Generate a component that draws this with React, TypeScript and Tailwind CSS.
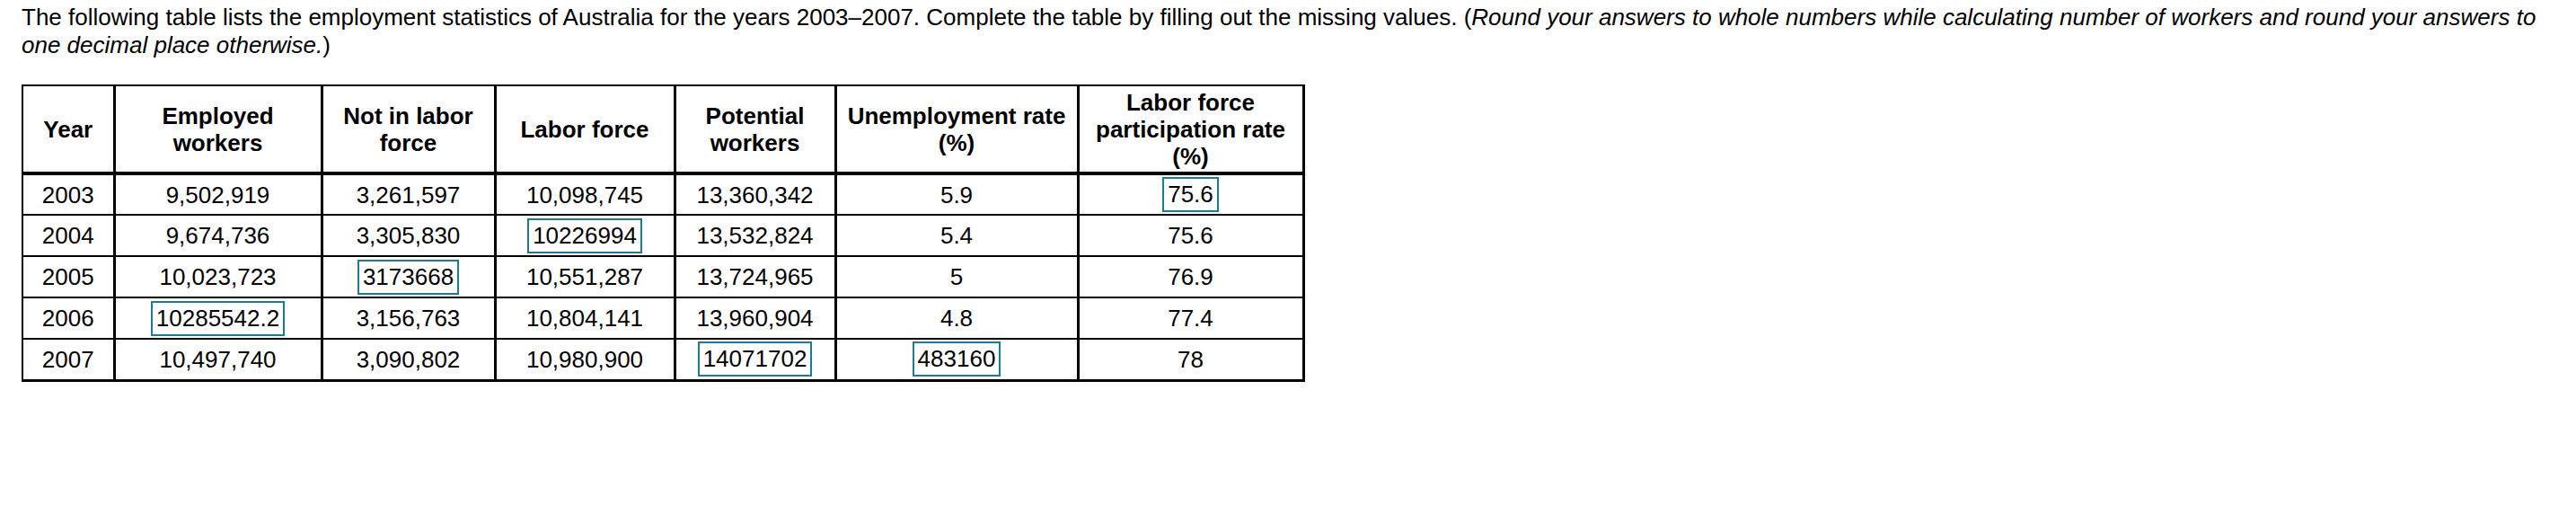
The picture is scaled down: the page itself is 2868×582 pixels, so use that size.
import React from 'react';

type Cell = { value: string; answer?: boolean };

const rows: { year: string; cells: Cell[] }[] = [
  {
    year: '2003',
    cells: [
      { value: '9,502,919' },
      { value: '3,261,597' },
      { value: '10,098,745' },
      { value: '13,360,342' },
      { value: '5.9' },
      { value: '75.6', answer: true },
    ],
  },
  {
    year: '2004',
    cells: [
      { value: '9,674,736' },
      { value: '3,305,830' },
      { value: '10226994', answer: true },
      { value: '13,532,824' },
      { value: '5.4' },
      { value: '75.6' },
    ],
  },
  {
    year: '2005',
    cells: [
      { value: '10,023,723' },
      { value: '3173668', answer: true },
      { value: '10,551,287' },
      { value: '13,724,965' },
      { value: '5' },
      { value: '76.9' },
    ],
  },
  {
    year: '2006',
    cells: [
      { value: '10285542.2', answer: true },
      { value: '3,156,763' },
      { value: '10,804,141' },
      { value: '13,960,904' },
      { value: '4.8' },
      { value: '77.4' },
    ],
  },
  {
    year: '2007',
    cells: [
      { value: '10,497,740' },
      { value: '3,090,802' },
      { value: '10,980,900' },
      { value: '14071702', answer: true },
      { value: '483160', answer: true },
      { value: '78' },
    ],
  },
];

function Answer({ value }: { value: string }) {
  return (
    <span className="inline-block border-2 border-[#1b7c98] px-[4px] py-[3px] leading-[29px]">
      {value}
    </span>
  );
}

export default function App() {
  return (
    <div className="min-h-screen bg-white text-black font-['Liberation_Sans',Arial,sans-serif] pl-[24px] pt-[4px]">
      <p className="text-[26px] leading-[31px]">
        The following table lists the employment statistics of Australia for the years 2003–2007. Complete the table by
        filling out the missing values. (
        <i>Round your answers to whole numbers while calculating number of workers and round your answers to</i>
        <br />
        <i>one decimal place otherwise.</i>)
      </p>

      <table className="mt-[28px] w-[1428px] table-fixed border-collapse text-[26px] text-center">
        <colgroup>
          <col className="w-[102px]" />
          <col className="w-[231px]" />
          <col className="w-[193px]" />
          <col className="w-[200px]" />
          <col className="w-[179px]" />
          <col className="w-[270px]" />
          <col className="w-[251px]" />
        </colgroup>
        <thead>
          <tr className="h-[98px] font-bold leading-[30px]">
            <th className="border-2 border-b-4 border-r-[3px] border-black px-1">Year</th>
            <th className="border-x-[3px] border-t-2 border-b-4 border-black px-1">Employed workers</th>
            <th className="border-x-[3px] border-t-2 border-b-4 border-black px-1">Not in labor force</th>
            <th className="border-x-[3px] border-t-2 border-b-4 border-black px-1">Labor force</th>
            <th className="border-x-[3px] border-t-2 border-b-4 border-black px-1">Potential workers</th>
            <th className="border-x-[3px] border-t-2 border-b-4 border-black px-1">Unemployment rate (%)</th>
            <th className="border-x-[3px] border-t-2 border-b-4 border-black px-1">Labor force participation rate (%)</th>
          </tr>
        </thead>
        <tbody>
          {rows.map((row, i) => (
            <tr key={row.year} className="h-[46px] leading-[30px]">
              <td
                className={
                  i === rows.length - 1
                    ? 'border-l-2 border-r-[3px] border-t-2 border-b-[3px] border-black'
                    : 'border-l-2 border-r-[3px] border-y-2 border-black'
                }
              >
                {row.year}
              </td>
              {row.cells.map((c, j) => (
                <td
                  key={j}
                  className={
                    i === rows.length - 1
                      ? 'border-x-[3px] border-t-2 border-b-[3px] border-black'
                      : 'border-x-[3px] border-y-2 border-black'
                  }
                >
                  {c.answer ? <Answer value={c.value} /> : c.value}
                </td>
              ))}
            </tr>
          ))}
        </tbody>
      </table>
    </div>
  );
}
